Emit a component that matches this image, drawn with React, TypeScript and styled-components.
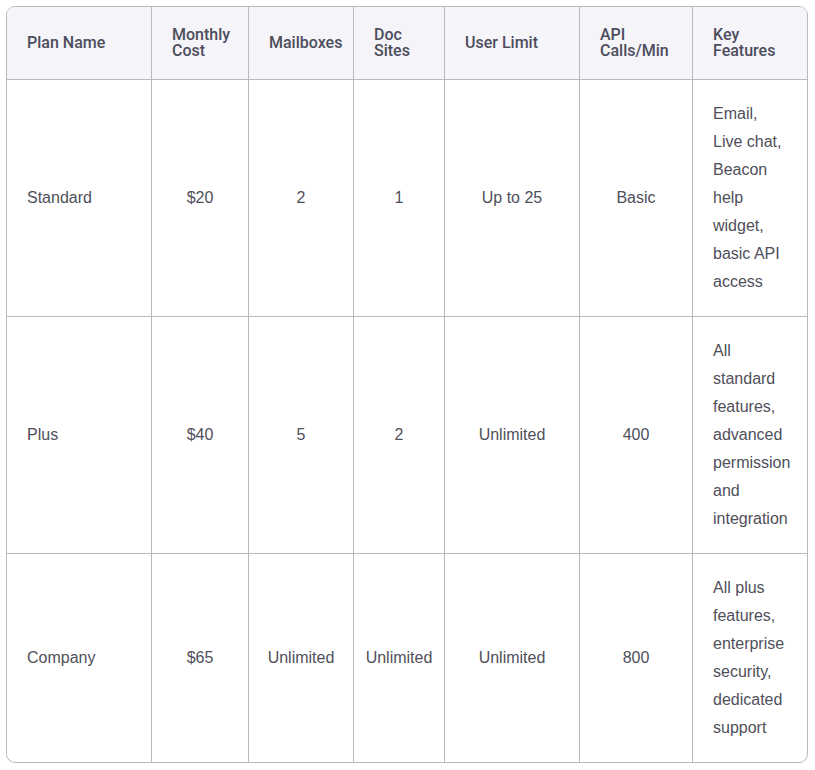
import React from "react";
import styled, { createGlobalStyle } from "styled-components";

const GlobalStyle = createGlobalStyle`
  body {
    margin: 0;
    padding: 6px;
    background: #ffffff;
  }
`;

interface Plan {
  name: string;
  cost: string;
  mailboxes: string;
  docSites: string;
  users: string;
  api: string;
  features: string;
}

const plans: Plan[] = [
  {
    name: "Standard",
    cost: "$20",
    mailboxes: "2",
    docSites: "1",
    users: "Up to 25",
    api: "Basic",
    features: "Email, Live chat, Beacon help widget, basic API access",
  },
  {
    name: "Plus",
    cost: "$40",
    mailboxes: "5",
    docSites: "2",
    users: "Unlimited",
    api: "400",
    features: "All standard features, advanced permission and integration",
  },
  {
    name: "Company",
    cost: "$65",
    mailboxes: "Unlimited",
    docSites: "Unlimited",
    users: "Unlimited",
    api: "800",
    features: "All plus features, enterprise security, dedicated support",
  },
];

const columns = [
  { label: ["Plan Name"], width: 145 },
  { label: ["Monthly", "Cost"], width: 97 },
  { label: ["Mailboxes"], width: 105 },
  { label: ["Doc", "Sites"], width: 91 },
  { label: ["User Limit"], width: 135 },
  { label: ["API", "Calls/Min"], width: 113 },
  { label: ["Key", "Features"], width: 114 },
];

const App = () => {
  return (
    <>
      <GlobalStyle />
      <Wrapper>
        <Table>
          <colgroup>
            {columns.map((c, i) => (
              <col key={i} style={{ width: c.width }} />
            ))}
          </colgroup>
          <thead>
            <tr>
              {columns.map((c, i) => (
                <Th key={i}>
                  {c.label.map((line, j) => (
                    <HeadLine key={j}>{line}</HeadLine>
                  ))}
                </Th>
              ))}
            </tr>
          </thead>
          <tbody>
            {plans.map((plan) => (
              <tr key={plan.name}>
                <Td $align="left">{plan.name}</Td>
                <Td>{plan.cost}</Td>
                <Td>{plan.mailboxes}</Td>
                <Td>{plan.docSites}</Td>
                <Td>{plan.users}</Td>
                <Td>{plan.api}</Td>
                <Td $align="left">{plan.features}</Td>
              </tr>
            ))}
          </tbody>
        </Table>
      </Wrapper>
    </>
  );
};

const Wrapper = styled.div`
  width: 800px;
  border: 1px solid #b9b9c1;
  border-radius: 9px;
  overflow: hidden;
`;

const Table = styled.table`
  width: 800px;
  table-layout: fixed;
  border-collapse: separate;
  border-spacing: 0;

  tr > *:last-child {
    border-right: none;
  }

  tbody tr:last-child td {
    border-bottom: none;
  }
`;

const Th = styled.th`
  padding: 20px 18px 20px 20px;
  background: #f4f4f9;
  border-right: 1px solid #b9b9c1;
  border-bottom: 1px solid #b9b9c1;
  text-align: left;
  vertical-align: middle;
  font-family: Roboto, "Liberation Sans", sans-serif;
  font-size: 16px;
  font-weight: 500;
  line-height: 16px;
  color: #4d4d5c;
`;

const HeadLine = styled.div`
  white-space: nowrap;
`;

const Td = styled.td<{ $align?: "left" | "center" }>`
  padding: ${(p) => (p.$align === "left" ? "20px 20px" : "20px 8px")};
  border-right: 1px solid #b9b9c1;
  border-bottom: 1px solid #b9b9c1;
  text-align: ${(p) => p.$align || "center"};
  vertical-align: middle;
  font-family: "Liberation Sans", Arial, sans-serif;
  font-size: 16px;
  line-height: 28px;
  color: #4f4f5a;
`;

export default App;
